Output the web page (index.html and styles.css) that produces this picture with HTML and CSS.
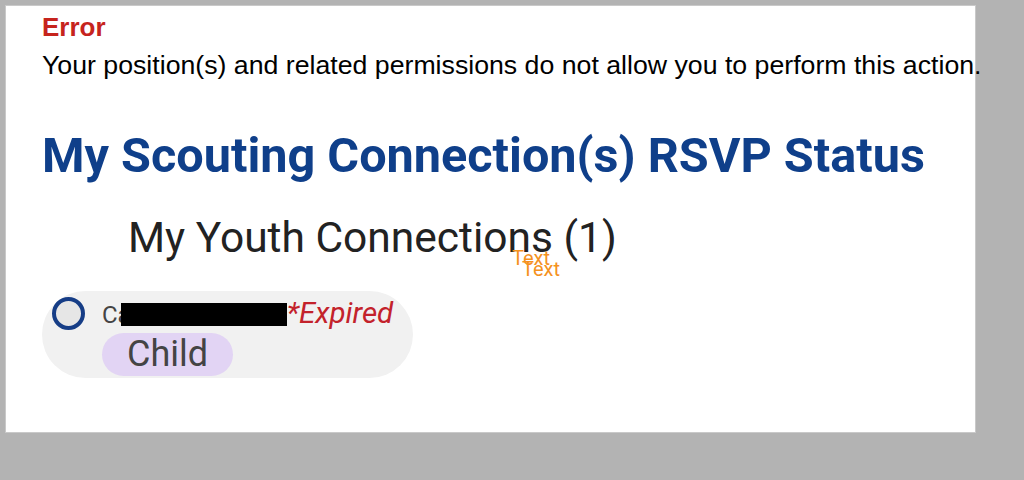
FILE: index.html
```html
<!DOCTYPE html>
<html lang="en">
<head>
<meta charset="utf-8">
<title>My Scouting Connection(s) RSVP Status</title>
<link rel="stylesheet" href="styles.css">
</head>
<body>
<div class="panel">
  <div class="alert">
    <div class="alert-title">Error</div>
    <div class="alert-text">Your position(s) and related permissions do not allow you to perform this action.</div>
  </div>
  <h1 class="page-title">My Scouting Connection(s) RSVP Status</h1>
  <div class="section">
    <h2 class="section-title">My Youth Connections (1)</h2>
    <span class="debug-label debug-label-a">Text</span>
    <span class="debug-label debug-label-b">Text</span>
  </div>
  <div class="card">
    <span class="radio"></span>
    <div class="info">
      <div class="name-line"><span class="name">Ca</span><span class="redact"></span><span class="expired">*Expired</span></div>
      <span class="chip">Child</span>
    </div>
  </div>
</div>
</body>
</html>
```
FILE: styles.css
```css
html, body {
  margin: 0;
  padding: 0;
}
body {
  background: #b3b3b3;
  font-family: "Liberation Sans", Arial, sans-serif;
  width: 1024px;
  height: 480px;
  overflow: hidden;
}
.panel {
  position: relative;
  margin: 5px;
  width: 933px;
  height: 420px;
  padding: 6px 0 0 36px;
  background: #ffffff;
  border: 1px solid #c9c9c9;
}
.alert-title {
  color: #c6241d;
  font-weight: bold;
  font-size: 26px;
  line-height: 30px;
}
.alert-text {
  color: #000;
  font-size: 26.7px;
  line-height: 30px;
  margin-top: 8px;
  white-space: nowrap;
}
.page-title {
  margin: 48px 0 0 0;
  font-family: Roboto, "Liberation Sans", sans-serif;
  font-weight: 700;
  font-size: 48.6px;
  line-height: 56px;
  color: #0f3f8a;
  white-space: nowrap;
}
.section {
  position: relative;
  margin-top: 28px;
  padding-left: 86px;
}
.section-title {
  margin: 0;
  font-family: Roboto, "Liberation Sans", sans-serif;
  font-weight: 400;
  font-size: 42.5px;
  line-height: 52px;
  color: #222;
}
.debug-label {
  position: absolute;
  font-family: Roboto, "Liberation Sans", sans-serif;
  font-size: 20px;
  line-height: 20px;
  color: #f5921e;
}
.debug-label-a {
  left: 470px;
  top: 36px;
}
.debug-label-b {
  left: 480px;
  top: 47px;
}
.card {
  display: inline-flex;
  align-items: flex-start;
  margin: 27px 0 0 0;
  padding: 6px 20px 2px 10px;
  background: #f1f1f1;
  border-radius: 44px;
  font-family: Roboto, "Liberation Sans", sans-serif;
}
.radio {
  width: 25px;
  height: 25px;
  border: 4px solid #163d86;
  border-radius: 50%;
  background: #e6e6e6;
  flex: none;
}
.info {
  margin-left: 17px;
  display: flex;
  flex-direction: column;
  align-items: flex-start;
}
.name-line {
  line-height: 32px;
  height: 32px;
  white-space: nowrap;
}
.name {
  font-size: 24px;
  color: #444;
}
.redact {
  display: inline-block;
  width: 166px;
  height: 23px;
  margin-left: -10px;
  vertical-align: -3px;
  background: #000;
}
.expired {
  font-size: 29.5px;
  font-style: italic;
  color: #c3222b;
}
.chip {
  margin-top: 4px;
  padding: 0 25px;
  height: 43px;
  line-height: 43px;
  font-size: 36px;
  color: #444;
  background: #e2d4f4;
  border-radius: 22px;
}
```
